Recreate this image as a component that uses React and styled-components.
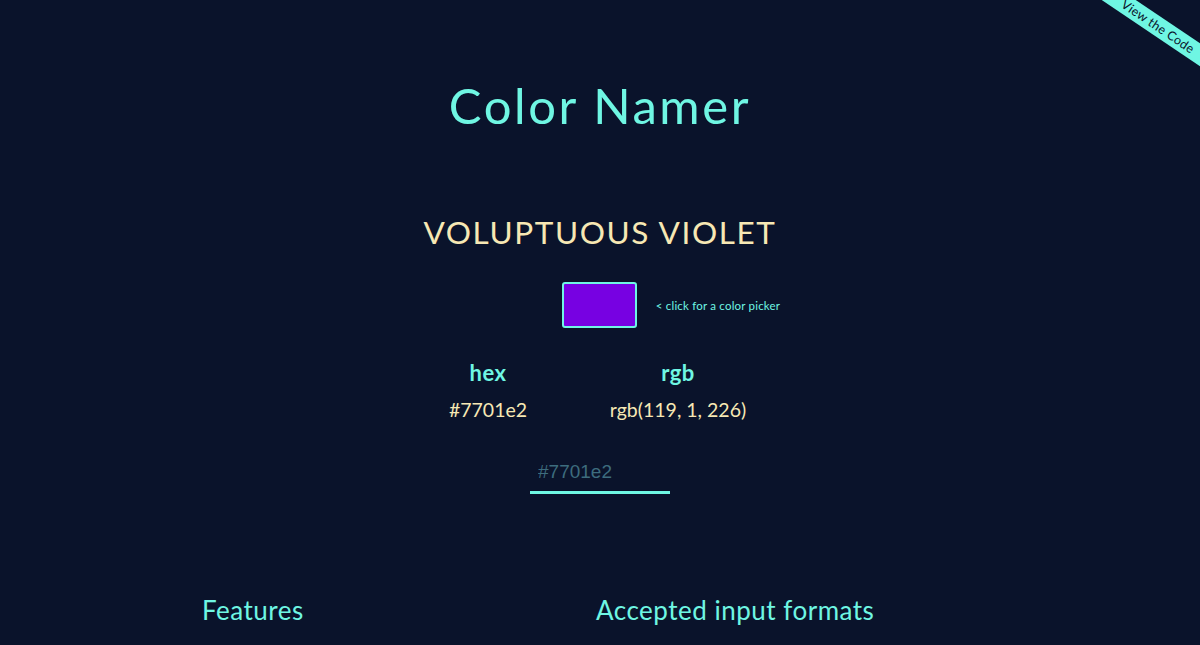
//* Dependencies
import React from "react";
import styled, { createGlobalStyle } from "styled-components";

const teal = "#6ff6e3";
const cream = "#f7e8b4";
const bg = "#0a132b";

//* Styled components
const GlobalStyle = createGlobalStyle`
  html, body {
    margin: 0;
    padding: 0;
    background: ${bg};
    overflow: hidden;
  }
  body {
    font-family: Lato, "Noto Sans", sans-serif;
  }
`;

const Page = styled.div`
  position: relative;
  width: 1200px;
  height: 645px;
  overflow: hidden;
  background: ${bg};
  display: flex;
  flex-direction: column;
  align-items: center;
`;

const Ribbon = styled.a`
  position: absolute;
  top: 17px;
  right: -40px;
  width: 164px;
  padding: 2px 0;
  line-height: 15px;
  transform: rotate(34deg);
  background: ${teal};
  color: ${bg};
  font-size: 12.5px;
  text-align: center;
  text-decoration: none;
  letter-spacing: 0.3px;
`;

const Title = styled.h1`
  margin: 76px 0 0;
  font-weight: 400;
  font-size: 49px;
  line-height: 58px;
  letter-spacing: 2.6px;
  color: ${teal};
`;

const ColorName = styled.h2`
  margin: 78px 0 0;
  font-weight: 400;
  font-size: 31.5px;
  line-height: 40px;
  letter-spacing: 1.6px;
  color: ${cream};
`;

const PickerRow = styled.div`
  margin-top: 30px;
  display: flex;
  align-items: center;
  gap: 19px;
  padding-left: 142px;
`;

const Swatch = styled.div`
  width: 71px;
  height: 42px;
  border: 2px solid ${teal};
  border-radius: 3px;
  background: ${(p) => p.color};
`;

const Hint = styled.span`
  font-size: 11.5px;
  color: ${teal};
  letter-spacing: 0.2px;
`;

const Values = styled.div`
  margin-top: 31px;
  display: grid;
  grid-template-columns: 156px 224px;
  row-gap: 11px;
`;

const Heading = styled.div`
  text-align: center;
  font-weight: 700;
  font-size: 22px;
  line-height: 28px;
  letter-spacing: 0.5px;
  color: ${teal};
`;

const Value = styled.div`
  text-align: center;
  font-size: 19.5px;
  line-height: 24px;
  color: ${cream};
`;

const Input = styled.input`
  margin-top: 39px;
  width: 140px;
  box-sizing: border-box;
  padding: 0 0 8px 8px;
  background: transparent;
  border: none;
  border-bottom: 3px solid ${teal};
  outline: none;
  font-family: "Liberation Sans", Arial, sans-serif;
  font-size: 19px;
  color: ${cream};
  caret-color: ${teal};
  &::placeholder {
    color: #3d6c7e;
  }
`;

const Sections = styled.div`
  margin-top: 101px;
  width: 800px;
  display: grid;
  grid-template-columns: 394px 1fr;
  padding-left: 4px;
`;

const SectionTitle = styled.h3`
  margin: 0;
  font-weight: 400;
  font-size: 26px;
  line-height: 30px;
  letter-spacing: 0.5px;
  color: ${teal};
`;

const App = () => {
  return (
    <Page>
      <GlobalStyle />
      <Ribbon href="#">View the Code</Ribbon>
      <Title>Color Namer</Title>
      <ColorName>VOLUPTUOUS VIOLET</ColorName>
      <PickerRow>
        <Swatch color="#7701e2" />
        <Hint>&lt; click for a color picker</Hint>
      </PickerRow>
      <Values>
        <Heading>hex</Heading>
        <Heading>rgb</Heading>
        <Value>#7701e2</Value>
        <Value>rgb(119, 1, 226)</Value>
      </Values>
      <Input type="text" placeholder="#7701e2" autoFocus />
      <Sections>
        <SectionTitle>Features</SectionTitle>
        <SectionTitle>Accepted input formats</SectionTitle>
      </Sections>
    </Page>
  );
};

export default App;
